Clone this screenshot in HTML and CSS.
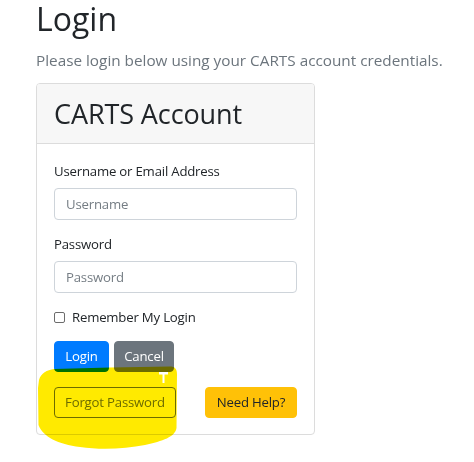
FILE: index.html
```html
<!DOCTYPE html>
<html lang="en">
<head>
<meta charset="utf-8">
<title>Login</title>
<link rel="stylesheet" href="styles.css">
</head>
<body>
<main class="page">
  <h1 class="title">Login</h1>
  <p class="lead">Please login below using your CARTS account credentials.</p>
  <section class="card">
    <header class="card-header"><h2 class="card-title">CARTS Account</h2></header>
    <form class="card-body">
      <div class="group">
        <label class="label" for="user">Username or Email Address</label>
        <input class="input" id="user" type="text" placeholder="Username">
      </div>
      <div class="group">
        <label class="label" for="pass">Password</label>
        <input class="input" id="pass" type="password" placeholder="Password">
      </div>
      <label class="check"><span class="box"></span>Remember My Login</label>
      <div class="actions">
        <button type="button" class="btn btn-primary">Login</button>
        <button type="button" class="btn btn-secondary">Cancel</button>
      </div>
      <div class="links">
        <button type="button" class="btn btn-outline">Forgot Password</button>
        <button type="button" class="btn btn-warning">Need Help?</button>
      </div>
    </form>
  </section>
</main>
<svg class="highlight" width="474" height="462" viewBox="0 0 474 462" aria-hidden="true">
  <path fill="#ffea00" d="M39 380 C41 373 47 370 54 369 L110 367.5 L170 366.5 C175 366.5 177 369 177 374 L176.5 428 C175 437 163 441 145 445 C125 449 100 450 80 447 C58 444 43 437 38.5 425 L38 388 Z"/>
  <rect x="162.5" y="372" width="2" height="11" fill="#fff"/>
  <rect x="159" y="372" width="9" height="2.5" fill="#fff"/>
</svg>
</body>
</html>
```
FILE: styles.css
```css
* { box-sizing: border-box; }
html, body { margin: 0; background: #fff; }
body {
  font-family: "Open Sans", "Noto Sans", Arial, sans-serif;
  color: #212529;
  width: 474px;
  height: 462px;
  overflow: hidden;
  position: relative;
}
.page { padding: 0 0 0 36px; }
.title {
  margin: 0;
  font-size: 32px;
  font-weight: 500;
  line-height: 38px;
  letter-spacing: 0;
}
.lead {
  margin: 12px 0 0;
  font-size: 15.3px;
  line-height: 20px;
  color: #6c757d;
  font-weight: 400;
}
.card {
  margin-top: 13px;
  width: 279px;
  border: 1px solid #dcdcdc;
  border-radius: 4px;
  overflow: hidden;
}
.card-header {
  background: #f7f7f7;
  border-bottom: 1px solid #dcdcdc;
  height: 60px;
  padding: 0 17px;
  display: flex;
  align-items: center;
}
.card-title {
  margin: 0;
  font-size: 27px;
  font-weight: 500;
  line-height: 34px;
  letter-spacing: -0.1px;
}
.card-body {
  padding: 17px 17px 16px;
  display: flex;
  flex-direction: column;
}
.group { display: flex; flex-direction: column; margin-bottom: 14px; }
.label { font-size: 13.2px; letter-spacing: -0.2px; line-height: 21px; margin-bottom: 6px; }
.input {
  height: 32px;
  width: 100%;
  border: 1px solid #ced4da;
  border-radius: 4px;
  padding: 0 11px;
  font-family: inherit;
  font-size: 13.2px;
  letter-spacing: -0.2px;
  color: #495057;
  background: #fff;
}
.input::placeholder { color: #757d84; }
.check {
  display: flex;
  align-items: center;
  font-size: 13.2px;
  letter-spacing: -0.2px;
  line-height: 21px;
  margin-bottom: 13px;
}
.box {
  width: 11px;
  height: 11px;
  border: 1px solid #6c6c6c;
  border-radius: 2px;
  margin-right: 7px;
  background: #fff;
}
.actions { display: flex; gap: 5px; margin-bottom: 15px; }
.links { display: flex; justify-content: space-between; }
.btn {
  height: 31px;
  border-radius: 4px;
  border: 1px solid transparent;
  font-family: inherit;
  font-size: 13.2px;
  letter-spacing: -0.2px;
  padding: 0;
  line-height: 29px;
  white-space: nowrap;
  text-align: center;
  cursor: pointer;
}
.btn-primary { background: #007bff; border-color: #007bff; color: #fff; width: 55px; }
.btn-secondary { background: #6c757d; border-color: #6c757d; color: #fff; width: 60px; }
.btn-outline { background: #fff; border-color: #6c757d; color: #6c757d; width: 122px; }
.btn-warning { background: #ffc107; border-color: #ffc107; color: #212529; width: 92px; }
.highlight {
  position: absolute;
  left: 0;
  top: 0;
  mix-blend-mode: multiply;
  pointer-events: none;
}
```
